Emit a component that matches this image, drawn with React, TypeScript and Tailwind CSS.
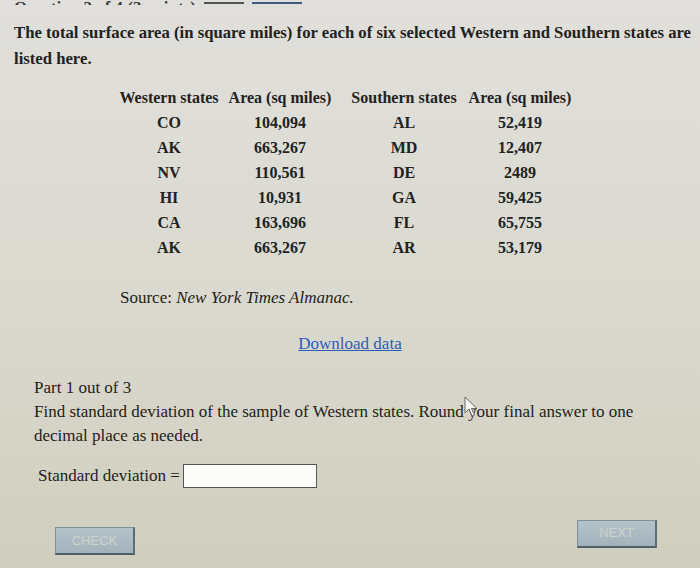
const western = [
    ["CO", "104,094"],
    ["AK", "663,267"],
    ["NV", "110,561"],
    ["HI", "10,931"],
    ["CA", "163,696"],
    ["AK", "663,267"],
];
const southern = [
    ["AL", "52,419"],
    ["MD", "12,407"],
    ["DE", "2489"],
    ["GA", "59,425"],
    ["FL", "65,755"],
    ["AR", "53,179"],
];

const Cursor = () => (
    <svg className="absolute left-[464px] top-[396px]" width="14" height="22" viewBox="0 0 14 22">
        <path d="M1 1 L1 17 L5 13 L8 20 L10.5 19 L7.5 12.5 L13 12.5 Z" fill="#f4f4f0" stroke="#6b6b66" strokeWidth="1" strokeLinejoin="round" />
    </svg>
);

const NavButton = ({ label }: { label: string }) => (
    <button className="h-[28px] w-[80px] border border-[#7e909b] border-b-[2px] border-r-[2px] border-b-[#4f606b] border-r-[#5d6d77] bg-linear-to-b from-[#b5c3cb] to-[#a2b2bb] text-[13px] text-[#cdd3c8] font-['Liberation_Sans',sans-serif]">
        {label}
    </button>
);

export default function App() {
    return (
        <div className="relative w-[700px] h-[568px] overflow-hidden bg-linear-to-b from-[#e0dfdb] via-[#dbdad0] to-[#d0cebd] text-[#222220] font-['Liberation_Serif',serif] text-[17px]">
            {/* cut-off question heading */}
            <div className="h-[5px] overflow-hidden pl-[14px] flex items-end">
                <div className="flex items-end gap-2 font-bold text-[#3a3a38] leading-[16px] -mb-[11px]">
                    <span>Question 2 of 4 (3 points)</span>
                    <span className="mb-[12px] h-[2px] w-[40px] bg-[#555]" />
                    <span className="mb-[12px] h-[2px] w-[50px] bg-[#3e5a80]" />
                </div>
            </div>

            <div className="pl-[14px] pr-[4px] pt-[15px] font-bold leading-[26px] text-[16.7px]">
                The total surface area (in square miles) for each of six selected Western and Southern states are listed here.
            </div>

            {/* data table */}
            <div className="mt-[13px] ml-[114px] font-bold text-[16px]">
                <div className="flex h-[25px] items-center whitespace-nowrap">
                    <span className="w-[110px] text-center">Western states</span>
                    <span className="w-[112px] text-center">Area (sq miles)</span>
                    <span className="ml-[10px] w-[116px] text-center">Southern states</span>
                    <span className="w-[116px] text-center">Area (sq miles)</span>
                </div>
                {western.map((w, i) => (
                    <div key={i} className="flex h-[25px] items-center whitespace-nowrap">
                        <span className="w-[110px] text-center">{w[0]}</span>
                        <span className="w-[112px] text-center">{w[1]}</span>
                        <span className="ml-[10px] w-[116px] text-center">{southern[i][0]}</span>
                        <span className="w-[116px] text-center">{southern[i][1]}</span>
                    </div>
                ))}
            </div>

            <div className="mt-[26px] ml-[120px] leading-[24px]">
                Source: <i>New York Times Almanac.</i>
            </div>

            <div className="mt-[22px] text-center leading-[24px]">
                <a className="text-[#2c5bb8] underline">Download data</a>
            </div>

            <div className="mt-[20px] pl-[34px] pr-[40px] leading-[24px]">
                <div>Part 1 out of 3</div>
                <div>
                    Find standard deviation of the sample of Western states. Round your final answer to one<br />
                    decimal place as needed.
                </div>
            </div>

            <div className="mt-[15px] ml-[38px] flex items-center gap-[3px]">
                <span>Standard deviation =</span>
                <div className="h-[24px] w-[134px] border border-[#555] bg-[#fbfbf8]" />
            </div>

            <div className="mt-[31px] flex items-start justify-between pl-[55px] pr-[43px]">
                <div className="mt-[7px]">
                    <NavButton label="CHECK" />
                </div>
                <NavButton label="NEXT" />
            </div>

            <Cursor />
        </div>
    );
}
